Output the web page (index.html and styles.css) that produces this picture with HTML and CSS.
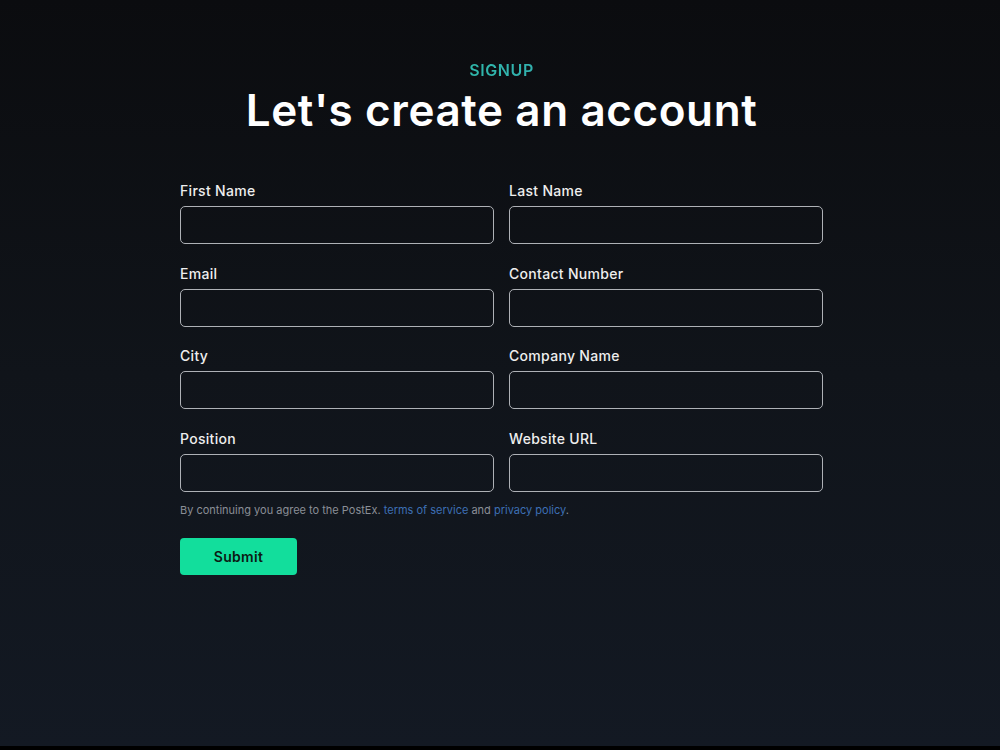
FILE: index.html
```html
<!DOCTYPE html>
<html lang="en">
<head>
<meta charset="utf-8">
<title>Signup</title>
<link rel="stylesheet" href="styles.css">
</head>
<body>
<main class="page">
  <header class="intro">
    <p class="eyebrow">SIGNUP</p>
    <h1 class="title">Let's create an account</h1>
  </header>
  <form class="form">
    <div class="grid">
      <label class="field"><span class="label">First Name</span><input class="input" type="text"></label>
      <label class="field"><span class="label">Last Name</span><input class="input" type="text"></label>
      <label class="field"><span class="label">Email</span><input class="input" type="email"></label>
      <label class="field"><span class="label">Contact Number</span><input class="input" type="tel"></label>
      <label class="field"><span class="label">City</span><input class="input" type="text"></label>
      <label class="field"><span class="label">Company Name</span><input class="input" type="text"></label>
      <label class="field"><span class="label">Position</span><input class="input" type="text"></label>
      <label class="field"><span class="label">Website URL</span><input class="input" type="url"></label>
    </div>
    <p class="terms">By continuing you agree to the PostEx. <a class="link" href="#">terms of service</a> and <a class="link" href="#">privacy policy</a>.</p>
    <button class="submit" type="button">Submit</button>
  </form>
</main>
</body>
</html>
```

FILE: styles.css
```css
html {
  background: #000;
}
body {
  margin: 0;
  height: 746px;
  background: linear-gradient(180deg, #0b0c0f 0%, #10141a 50%, #131923 100%);
  font-family: Inter, "Noto Sans", sans-serif;
  color: #f2f2f2;
}
.page {
  width: 643px;
  margin: 0 auto;
  padding-left: 3px;
  padding-top: 59px;
}
.intro {
  text-align: center;
}
.eyebrow {
  margin: 0;
  font-size: 16px;
  line-height: 22px;
  font-weight: 600;
  letter-spacing: 0.6px;
  background: linear-gradient(90deg, #22d39a, #3f95bf);
  -webkit-background-clip: text;
  background-clip: text;
  color: transparent;
}
.title {
  margin: 2px 0 0;
  font-size: 44px;
  line-height: 54px;
  font-weight: 600;
  color: #ffffff;
  letter-spacing: 0.6px;
}
.form {
  margin-top: 45px;
}
.grid {
  display: grid;
  grid-template-columns: 1fr 1fr;
  column-gap: 15px;
  row-gap: 20.5px;
}
.field {
  display: flex;
  flex-direction: column;
  gap: 6px;
}
.label {
  font-size: 14px;
  line-height: 18px;
  font-weight: 500;
  letter-spacing: 0.3px;
  color: #eeeeee;
}
.input {
  box-sizing: border-box;
  height: 38px;
  width: 100%;
  background: transparent;
  border: 1px solid #aeb1b6;
  border-radius: 5px;
  color: #fff;
  font: inherit;
}
.terms {
  margin: 10px 0 0;
  font-size: 11px;
  line-height: 16px;
  color: #8a8e96;
}
.link {
  color: #3d6fb4;
  text-decoration: none;
}
.submit {
  margin-top: 20px;
  width: 117px;
  height: 37px;
  border: 0;
  border-radius: 4px;
  background: #12de9c;
  color: #0c1a14;
  font-family: inherit;
  font-size: 14px;
  font-weight: 600;
  letter-spacing: 0.3px;
}
```
